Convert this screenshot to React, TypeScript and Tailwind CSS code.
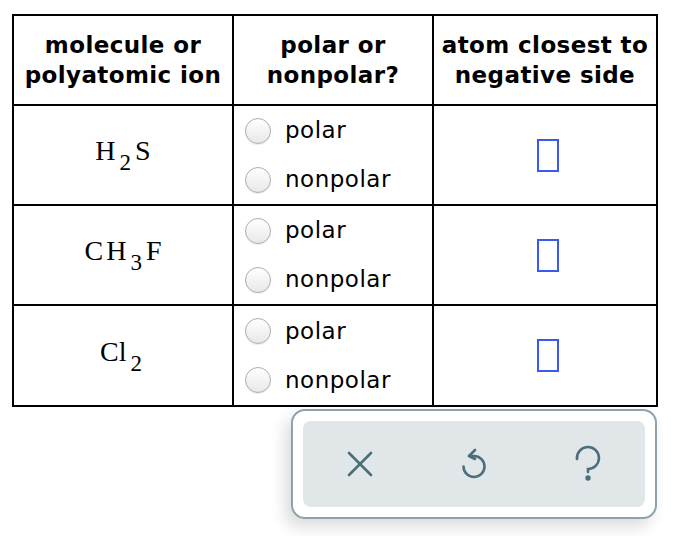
import React, { useState } from "react";

type Row = { id: string; formula: React.ReactNode };

const sans = { fontFamily: '"DejaVu Sans", Verdana, sans-serif' };
const serif = { fontFamily: '"Liberation Serif", "Times New Roman", serif' };

function Sub({ children }: { children: React.ReactNode }) {
  return <span className="relative top-[10px] mx-[4px] text-[23px]">{children}</span>;
}

const rows: Row[] = [
  {
    id: "h2s",
    formula: (
      <>
        H<Sub>2</Sub>S
      </>
    ),
  },
  {
    id: "ch3f",
    formula: (
      <>
        C<span className="ml-[3px]">H</span>
        <Sub>3</Sub>F
      </>
    ),
  },
  {
    id: "cl2",
    formula: (
      <>
        Cl<Sub>2</Sub>
      </>
    ),
  },
];

function Radio({ checked, onClick, label }: { checked: boolean; onClick: () => void; label: string }) {
  return (
    <button onClick={onClick} className="flex h-[50px] items-center gap-[14px] text-left">
      <span className="flex h-[26px] w-[26px] items-center justify-center rounded-full border border-[#adadad] bg-gradient-to-b from-white to-[#e8e8e8] shadow-[0_1px_1px_rgba(0,0,0,0.08)]">
        {checked && <span className="h-[9px] w-[9px] rounded-full bg-[#333]" />}
      </span>
      <span className="text-[23px] tracking-[0.5px] text-black">{label}</span>
    </button>
  );
}

export default function App() {
  const [answers, setAnswers] = useState<Record<string, string>>({});

  return (
    <div className="h-[536px] w-[680px] bg-white pt-[14px] pl-[12px]" style={sans}>
      <div className="w-[646px] border-2 border-black">
        <div className="flex h-[90px] border-b-2 border-black text-[23px] font-bold leading-[30px] tracking-[0.4px] text-black">
          <div className="flex w-[220px] items-center justify-center border-r-2 border-black text-center">
            molecule or
            <br />
            polyatomic ion
          </div>
          <div className="flex w-[200px] items-center justify-center border-r-2 border-black text-center">
            polar or
            <br />
            nonpolar?
          </div>
          <div className="flex w-[222px] items-center justify-center text-center">
            atom closest to
            <br />
            negative side
          </div>
        </div>
        {rows.map((r, i) => (
          <div
            key={r.id}
            className={
              i < rows.length - 1 ? "flex h-[100px] border-b-2 border-black" : "flex h-[99px]"
            }
          >
            <div
              className="flex w-[220px] items-center justify-center border-r-2 border-black pb-[8px] text-[28px] text-black"
              style={serif}
            >
              <span>{r.formula}</span>
            </div>
            <div className="flex w-[200px] flex-col border-r-2 border-black pl-[11px]">
              {["polar", "nonpolar"].map((opt) => (
                <Radio
                  key={opt}
                  label={opt}
                  checked={answers[r.id] === opt}
                  onClick={() => setAnswers({ ...answers, [r.id]: opt })}
                />
              ))}
            </div>
            <div className="flex w-[222px] items-center justify-center pl-[6px]">
              <div className="h-[33px] w-[22px] border-2 border-[#3a58f4]" />
            </div>
          </div>
        ))}
      </div>

      <div className="flex w-[646px] justify-end pt-[2px] pr-[1px]">
        <div className="h-[110px] w-[366px] rounded-[14px] border-2 border-[#8fa2ac] bg-white p-[10px] shadow-[-6px_8px_16px_rgba(0,0,0,0.14)]">
          <div className="grid h-full grid-cols-3 items-center rounded-[8px] bg-[#e1e6e9] text-[#4b6e7c]">
            <button className="flex justify-center">
              <svg width="26" height="26" viewBox="0 0 26 26" fill="none" stroke="currentColor" strokeWidth="2.6" strokeLinecap="round">
                <path d="M2 2 L24 24 M24 2 L2 24" />
              </svg>
            </button>
            <button className="flex justify-center">
              <svg width="28" height="34" viewBox="0 0 28 34" fill="none" stroke="currentColor" strokeWidth="2.6" strokeLinecap="round" strokeLinejoin="round">
                <path d="M15 3 L9 9 L15 12" />
                <path d="M9 9 H14 A10.5 10.5 0 1 1 3.5 19.5" />
              </svg>
            </button>
            <button className="flex justify-center">
              <svg width="28" height="38" viewBox="0 0 28 38" fill="none" stroke="currentColor" strokeWidth="2.6" strokeLinecap="round">
                <path d="M3 14 A11 11 0 1 1 14 24 V27" />
                <circle cx="14" cy="33" r="1.4" fill="currentColor" />
              </svg>
            </button>
          </div>
        </div>
      </div>
    </div>
  );
}
